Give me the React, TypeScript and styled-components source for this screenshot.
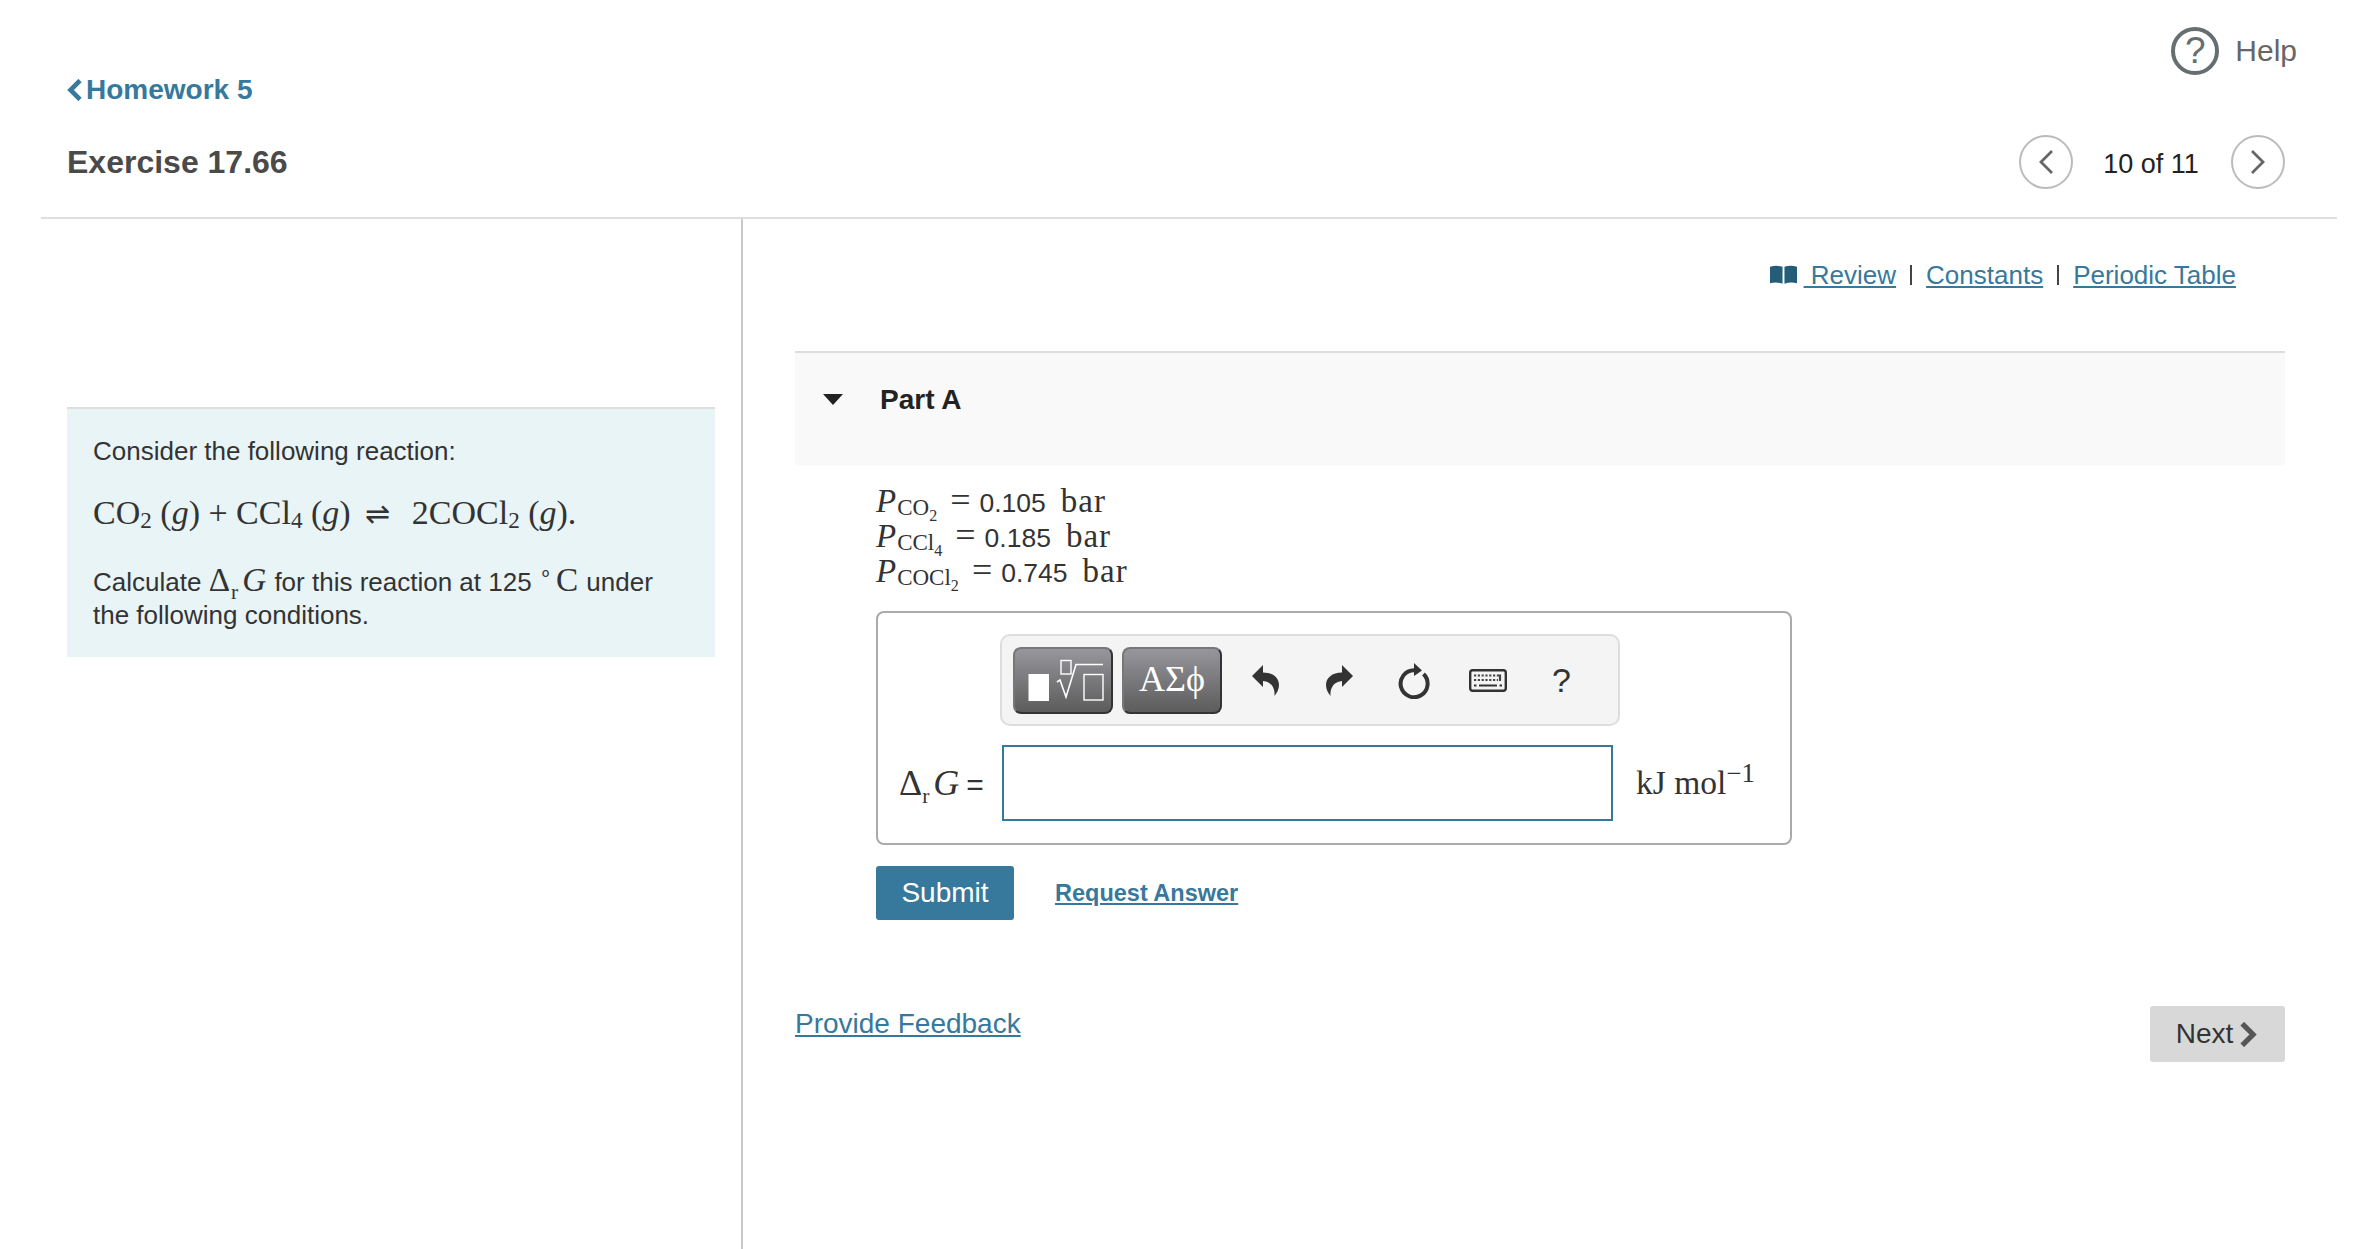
import React from 'react'
import styled, { createGlobalStyle } from 'styled-components'

const GlobalStyle = createGlobalStyle`
    html, body {
        margin: 0;
        padding: 0;
        background: #fff;
        font-family: "Liberation Sans", Arial, sans-serif;
        color: #333;
    }
`

const BookIcon = () => (
    <svg width="27" height="20" viewBox="0 0 28 20">
        <path d="M0 1.5 Q7 -0.5 13 1.5 V19 Q7 17 0 18.5 Z" fill="#255d78" />
        <path d="M28 1.5 Q21 -0.5 15 1.5 V19 Q21 17 28 18.5 Z" fill="#255d78" />
    </svg>
)

const TemplateIcon = () => (
    <svg width="96" height="62" viewBox="2 2 96 62">
        <rect x="15.5" y="27" width="20.5" height="27" fill="#fff" />
        <rect x="48" y="13.5" width="10" height="13.5" fill="none" stroke="#fff" strokeWidth="1.4" />
        <path d="M44 35 L47 33 L53 50 L63 17.5 H90" fill="none" stroke="#fff" strokeWidth="1.6" />
        <rect x="71" y="27.5" width="19" height="25.5" fill="none" stroke="#fff" strokeWidth="1.4" />
    </svg>
)

const UndoIcon = ({ flip }: { flip?: boolean }) => (
    <svg width="27" height="31" viewBox="0 0 27 31" style={flip ? { transform: 'scaleX(-1)' } : undefined}>
        <path d="M0 11 L11 0 V7.5 C21 7.5 27 13 27 20 C27 24 25 28 22.5 31 C23 25 21 17 11 16 V22 Z" fill="#333" />
    </svg>
)

const ResetIcon = () => (
    <svg width="32" height="37" viewBox="0 0 32 37">
        <path d="M25.5 12 A13.5 13.5 0 1 1 16 8.2" fill="none" stroke="#333" strokeWidth="4" />
        <path d="M16 1 L24 8.5 L16 14 Z" fill="#333" />
    </svg>
)

const KeyboardIcon = () => (
    <svg width="38" height="23" viewBox="0 0 38 23">
        <rect x="1.2" y="1.2" width="35.6" height="20.6" rx="2.5" fill="#f4f4f4" stroke="#333" strokeWidth="2.4" />
        <path d="M5 6.5 H32 M5 11 H29" stroke="#444" strokeWidth="2.2" strokeDasharray="2.2 1.6" />
        <path d="M31 5.5 V12" stroke="#444" strokeWidth="2.2" />
        <path d="M5 16.5 H7.5 M10 16.5 H28 M30.5 16.5 H33" stroke="#333" strokeWidth="2.2" />
    </svg>
)

const ChevronBold = ({ left, color, w, h }: { left?: boolean; color: string; w: number; h: number }) => (
    <svg width={w} height={h} viewBox="0 0 15 22">
        <path d={left ? 'M13 1.5 L3.5 11 L13 20.5' : 'M2 1.5 L11.5 11 L2 20.5'} fill="none" stroke={color} strokeWidth="4.6" />
    </svg>
)

const ChevronThin = ({ left }: { left?: boolean }) => (
    <svg width="16" height="26" viewBox="0 0 16 26">
        <path d={left ? 'M14 2 L3 13 L14 24' : 'M2 2 L13 13 L2 24'} fill="none" stroke="#666" strokeWidth="2.8" />
    </svg>
)

const App = () => {
    return (
        <>
            <GlobalStyle />
            <Page>
                <Header>
                    <HelpRow>
                        <HelpCircle>?</HelpCircle>
                        <HelpText>Help</HelpText>
                    </HelpRow>
                    <BackLink>
                        <ChevronBold left color="#36799c" w={15} h={22} />
                        Homework 5
                    </BackLink>
                    <TitleRow>
                        <Title>Exercise 17.66</Title>
                        <Pager>
                            <PagerButton><ChevronThin left /></PagerButton>
                            <PagerText>10 of 11</PagerText>
                            <PagerButton><ChevronThin /></PagerButton>
                        </Pager>
                    </TitleRow>
                </Header>
                <Columns>
                    <LeftColumn>
                        <InfoPanel>
                            <InfoLine>Consider the following reaction:</InfoLine>
                            <Equation>
                                CO<sub>2</sub> (<i>g</i>) + CCl<sub>4</sub> (<i>g</i>) <Harpoon>⇌</Harpoon> 2COCl<sub>2</sub> (<i>g</i>).
                            </Equation>
                            <InfoLine>
                                Calculate <MathText>Δ<sub>r</sub><i>G</i></MathText> for this reaction at 125 <MathText><sup>∘</sup>C</MathText> under the following conditions.
                            </InfoLine>
                        </InfoPanel>
                    </LeftColumn>
                    <RightColumn>
                        <LinksRow>
                            <BookIcon />
                            <ReviewLink>&nbsp;Review</ReviewLink>
                            <Separator />
                            <TextLink>Constants</TextLink>
                            <Separator />
                            <TextLink>Periodic Table</TextLink>
                        </LinksRow>
                        <PartHeader>
                            <Caret />
                            <PartTitle>Part A</PartTitle>
                        </PartHeader>
                        <PartBody>
                            <PressureLine><PVar>P</PVar><PSub>CO<sub>2</sub></PSub><Equals>=</Equals>0.105<PUnit>bar</PUnit></PressureLine>
                            <PressureLine><PVar>P</PVar><PSub>CCl<sub>4</sub></PSub><Equals>=</Equals>0.185<PUnit>bar</PUnit></PressureLine>
                            <PressureLine><PVar>P</PVar><PSub>COCl<sub>2</sub></PSub><Equals>=</Equals>0.745<PUnit>bar</PUnit></PressureLine>
                            <AnswerBox>
                                <Toolbar>
                                    <ToolButton><TemplateIcon /></ToolButton>
                                    <ToolButton>ΑΣϕ</ToolButton>
                                    <ToolIcon><UndoIcon /></ToolIcon>
                                    <ToolIcon><UndoIcon flip /></ToolIcon>
                                    <ToolIcon><ResetIcon /></ToolIcon>
                                    <ToolIcon><KeyboardIcon /></ToolIcon>
                                    <ToolIcon>?</ToolIcon>
                                </Toolbar>
                                <AnswerRow>
                                    <AnswerLabel><LabelMath>Δ<sub>r</sub><i>G</i></LabelMath>=</AnswerLabel>
                                    <AnswerInput />
                                    <Unit>kJ mol<sup>−1</sup></Unit>
                                </AnswerRow>
                            </AnswerBox>
                            <ActionRow>
                                <SubmitButton>Submit</SubmitButton>
                                <RequestLink>Request Answer</RequestLink>
                            </ActionRow>
                        </PartBody>
                        <FooterRow>
                            <FeedbackLink>Provide Feedback</FeedbackLink>
                            <NextButton>Next<ChevronBold color="#555" w={17} h={25} /></NextButton>
                        </FooterRow>
                    </RightColumn>
                </Columns>
            </Page>
        </>
    )
}

export default App

const Page = styled.div`
    width: 2296px;
    margin-left: 41px;
    height: 1249px;
    overflow: hidden;
`
const Header = styled.div`
    padding: 27px 52px 28px 26px;
    border-bottom: 2px solid #dedede;
`
const HelpRow = styled.div`
    height: 47px;
    display: flex;
    align-items: center;
    justify-content: flex-end;
    margin-right: -12px;
    gap: 16px;
`
const HelpCircle = styled.div`
    width: 48px;
    height: 48px;
    box-sizing: border-box;
    border: 4px solid #666e70;
    border-radius: 50%;
    display: flex;
    align-items: center;
    justify-content: center;
    font-size: 37px;
    color: #666e70;
`
const HelpText = styled.div`
    font-size: 30px;
    color: #666;
`
const BackLink = styled.div`
    display: flex;
    align-items: center;
    gap: 4px;
    height: 32px;
    font-size: 28px;
    font-weight: 700;
    color: #36799c;
`
const TitleRow = styled.div`
    margin-top: 29px;
    height: 54px;
    display: flex;
    align-items: center;
    justify-content: space-between;
`
const Title = styled.div`
    font-size: 32px;
    font-weight: 700;
    color: #4a4a4a;
`
const Pager = styled.div`
    display: flex;
    align-items: center;
`
const PagerButton = styled.div`
    width: 54px;
    height: 54px;
    box-sizing: border-box;
    border: 2px solid #bbb;
    border-radius: 50%;
    display: flex;
    align-items: center;
    justify-content: center;
`
const PagerText = styled.div`
    width: 158px;
    padding: 4px 2px 0 0;
    box-sizing: border-box;
    text-align: center;
    font-size: 27px;
    color: #222;
`
const Columns = styled.div`
    display: flex;
    height: 1031px;
`
const LeftColumn = styled.div`
    width: 700px;
    border-right: 2px solid #c9c9c9;
    padding-top: 188px;
`
const InfoPanel = styled.div`
    margin-left: 26px;
    width: 648px;
    height: 250px;
    box-sizing: border-box;
    background: #e9f4f7;
    border-top: 2px solid #dedede;
    padding: 26px 40px 0 26px;
`
const InfoLine = styled.div`
    font-size: 26px;
    line-height: 33px;
    color: #333;
`
const MathText = styled.span`
    font-family: "Liberation Serif", "Times New Roman", serif;
    font-size: 1.28em;
    letter-spacing: 1px;

    sub, sup {
        font-size: 0.64em;
        line-height: 0;
    }

    sub {
        margin-right: 3px;
    }

    sup {
        margin-right: 3px;
    }
`
const Equation = styled.div`
    font-family: "Liberation Serif", "Times New Roman", serif;
    font-size: 34px;
    line-height: 40px;
    margin: 25px 0 29px;
    white-space: nowrap;
    color: #333;

    sub {
        font-size: 0.68em;
        line-height: 0;
        vertical-align: -4px;
    }
`
const Harpoon = styled.span`
    font-family: "DejaVu Sans", sans-serif;
    font-size: 30px;
    margin: 0 13px 0 6px;
`
const RightColumn = styled.div`
    flex: 1;
    padding: 40px 52px 0 52px;
`
const LinksRow = styled.div`
    height: 32px;
    display: flex;
    align-items: center;
    justify-content: flex-end;
    padding-right: 49px;
    font-size: 26px;
    white-space: pre;
`
const TextLink = styled.span`
    color: #36799c;
    text-decoration: underline;
`
const ReviewLink = styled(TextLink)`
    margin-left: 7px;
`
const Separator = styled.span`
    width: 2px;
    height: 20px;
    margin: 0 14px;
    background: #444;
`
const PartHeader = styled.div`
    margin-top: 60px;
    height: 114px;
    box-sizing: border-box;
    background: #f9f9f9;
    border-top: 2px solid #dedede;
    padding: 31px 0 0 28px;
    display: flex;
    align-items: flex-start;
`
const Caret = styled.div`
    width: 0;
    height: 0;
    margin-top: 10px;
    border-left: 10px solid transparent;
    border-right: 10px solid transparent;
    border-top: 11px solid #222;
`
const PartTitle = styled.div`
    margin-left: 37px;
    font-size: 28px;
    line-height: 32px;
    font-weight: 700;
    color: #222;
`
const PartBody = styled.div`
    padding: 18px 0 0 81px;
`
const PressureLine = styled.div`
    display: flex;
    align-items: baseline;
    font-size: 26.5px;
    line-height: 35px;
    height: 35px;
    white-space: pre;
    color: #333;
`
const PVar = styled.i`
    font-family: "Liberation Serif", serif;
    font-size: 33px;
`
const PSub = styled.span`
    font-family: "Liberation Serif", serif;
    font-size: 23px;
    margin-left: 1px;
    transform: translateY(3px);

    sub {
        font-size: 0.7em;
        line-height: 0;
    }
`
const Equals = styled.span`
    font-family: "Liberation Serif", serif;
    font-size: 36px;
    margin: 0 9px 0 13px;
`
const PUnit = styled.span`
    font-family: "Liberation Serif", serif;
    font-size: 33px;
    letter-spacing: 1px;
    margin-left: 15px;
`
const AnswerBox = styled.div`
    margin-top: 23px;
    width: 916px;
    height: 234px;
    box-sizing: border-box;
    border: 2px solid #aaa;
    border-radius: 8px;
    padding: 21px 0 0 21px;
`
const Toolbar = styled.div`
    margin-left: 101px;
    width: 620px;
    height: 92px;
    box-sizing: border-box;
    background: #f4f4f4;
    border: 2px solid #ddd;
    border-radius: 10px;
    display: flex;
    align-items: center;
    padding-left: 11px;
    gap: 9px;
`
const ToolButton = styled.div`
    width: 100px;
    height: 67px;
    box-sizing: border-box;
    padding-bottom: 3px;
    border: 2px solid #333;
    border-top-color: #777;
    border-left-color: #777;
    border-radius: 8px;
    background: linear-gradient(#96969c, #5c5c5c);
    display: flex;
    align-items: center;
    justify-content: center;
    font-family: "Liberation Serif", serif;
    font-size: 36px;
    color: #fff;

    svg {
        margin-bottom: -3px;
    }
`
const ToolIcon = styled.div`
    width: 65px;
    display: flex;
    justify-content: center;
    align-items: center;
    font-size: 34px;
    color: #333;

    ${ToolButton} + & {
        margin-left: 2px;
    }
`
const AnswerRow = styled.div`
    margin-top: 19px;
    display: flex;
    align-items: center;
`
const AnswerLabel = styled.div`
    width: 103px;
    font-size: 30px;
    font-weight: 400;
    color: #333;
    white-space: nowrap;
`
const LabelMath = styled.span`
    font-family: "Liberation Serif", serif;
    font-size: 36px;
    margin-right: 7px;

    sub {
        font-size: 0.6em;
        line-height: 0;
        margin-right: 4px;
    }
`
const AnswerInput = styled.div`
    width: 611px;
    height: 76px;
    box-sizing: border-box;
    border: 2px solid #36799c;
    background: #fff;
`
const Unit = styled.div`
    margin-left: 23px;
    font-family: "Liberation Serif", serif;
    font-size: 33.5px;
    color: #333;
    white-space: nowrap;

    sup {
        font-size: 0.8em;
        line-height: 0;
    }
`
const ActionRow = styled.div`
    margin-top: 21px;
    display: flex;
    align-items: center;
`
const SubmitButton = styled.div`
    width: 138px;
    height: 54px;
    background: #36799c;
    border-radius: 3px;
    color: #fff;
    font-size: 28px;
    display: flex;
    align-items: center;
    justify-content: center;
`
const RequestLink = styled.div`
    margin-left: 41px;
    font-size: 23.5px;
    font-weight: 700;
    color: #36799c;
    text-decoration: underline;
`
const FooterRow = styled.div`
    margin-top: 86px;
    display: flex;
    justify-content: space-between;
    align-items: flex-start;
`
const FeedbackLink = styled.div`
    padding-top: 1px;
    font-size: 28px;
    line-height: 34px;
    color: #36799c;
    text-decoration: underline;
`
const NextButton = styled.div`
    width: 135px;
    height: 56px;
    padding-right: 2px;
    box-sizing: border-box;
    background: #d8d8d8;
    border-radius: 3px;
    font-size: 28px;
    color: #333;
    display: flex;
    align-items: center;
    justify-content: center;
    gap: 7px;
`
